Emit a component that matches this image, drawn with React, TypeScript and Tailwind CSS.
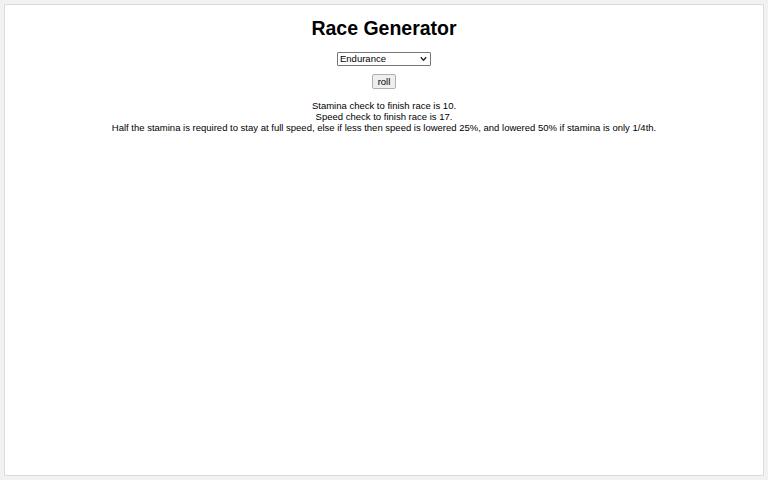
import React from "react";

export default function App() {
  return (
    <div className="min-h-[480px] bg-[#f2f2f2] p-[4px]" style={{ fontFamily: '"Liberation Sans", Arial, sans-serif' }}>
      <div className="h-[472px] border border-[#dcdcdc] bg-white flex flex-col items-center text-black">
        <h1 className="mt-[11px] text-[19.5px] leading-[24px] font-bold">Race Generator</h1>
        <div className="relative mt-[12px] w-[94px] h-[14px] flex">
          <select
            defaultValue="Endurance"
            className="block appearance-none w-full h-[14px] border border-[#767676] rounded-[1px] text-[9.5px] leading-[12px] pl-[2px] py-0 bg-white"
          >
            <option>Sprint</option>
            <option>Endurance</option>
            <option>Marathon</option>
          </select>
          {/* dropdown chevron */}
          <svg
            className="pointer-events-none absolute right-[4px] top-[4px]"
            width="7"
            height="6"
            viewBox="0 0 7 6"
          >
            <path d="M0.8 1.2 L3.5 4.2 L6.2 1.2" fill="none" stroke="#222" strokeWidth="1.3" />
          </svg>
        </div>
        <button className="mt-[8px] h-[15px] w-[24px] border border-[#b0b0b0] bg-[#efefef] rounded-[2px] text-[9.5px] leading-[11px]">
          roll
        </button>
        <div className="mt-[11px] text-[9.5px] leading-[11px] text-center">
          <div>Stamina check to finish race is 10.</div>
          <div>Speed check to finish race is 17.</div>
          <div>Half the stamina is required to stay at full speed, else if less then speed is lowered 25%, and lowered 50% if stamina is only 1/4th.</div>
        </div>
      </div>
    </div>
  );
}
